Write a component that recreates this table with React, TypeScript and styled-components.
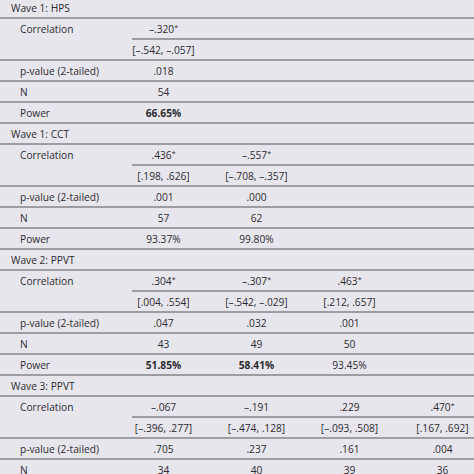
import React from 'react';
import styled, { createGlobalStyle } from 'styled-components';

const GlobalStyle = createGlobalStyle`
  html, body {
    margin: 0;
    padding: 0;
    overflow: hidden;
    background: #e8e6ed;
  }
`;

const Table = styled.div`
  width: 489px;
  margin-top: -2px;
  font-family: 'Open Sans', 'Noto Sans', sans-serif;
  font-size: 10.2px;
  color: #2c2b30;
  background: #e8e6ed;
`;

const Row = styled.div<{ $rule?: boolean }>`
  display: grid;
  grid-template-columns: 117px repeat(4, 93px);
  height: 19px;
  align-items: center;
  border-bottom: ${({ $rule }) => ($rule ? '2px solid #9d9ca1' : 'none')};
`;

const Header = styled.div`
  grid-column: 1 / -1;
  padding-left: 11px;
`;

const Label = styled.div`
  padding-left: 20px;
  white-space: nowrap;
`;

const Cell = styled.div<{ $bold?: boolean }>`
  text-align: center;
  white-space: nowrap;
  font-weight: ${({ $bold }) => ($bold ? 700 : 400)};
`;

const Star = styled.sup`
  font-size: 7px;
  line-height: 0;
  vertical-align: 3px;
`;

const Rule = styled.div`
  height: 2px;
  margin-left: 132px;
  background: #9d9ca1;
`;

interface IValue {
  r: string;
  sig?: boolean;
  ci: string;
  p: string;
  n: string;
  power: string;
  bold?: boolean;
}

interface ISection {
  title: string;
  values: IValue[];
}

const sections: ISection[] = [
  {
    title: 'Wave 1: HPS',
    values: [{ r: '–.320', sig: true, ci: '[–.542, –.057]', p: '.018', n: '54', power: '66.65%', bold: true }],
  },
  {
    title: 'Wave 1: CCT',
    values: [
      { r: '.436', sig: true, ci: '[.198, .626]', p: '.001', n: '57', power: '93.37%' },
      { r: '–.557', sig: true, ci: '[–.708, –.357]', p: '.000', n: '62', power: '99.80%' },
    ],
  },
  {
    title: 'Wave 2: PPVT',
    values: [
      { r: '.304', sig: true, ci: '[.004, .554]', p: '.047', n: '43', power: '51.85%', bold: true },
      { r: '–.307', sig: true, ci: '[–.542, –.029]', p: '.032', n: '49', power: '58.41%', bold: true },
      { r: '.463', sig: true, ci: '[.212, .657]', p: '.001', n: '50', power: '93.45%' },
    ],
  },
  {
    title: 'Wave 3: PPVT',
    values: [
      { r: '–.067', ci: '[–.396, .277]', p: '.705', n: '34', power: '' },
      { r: '–.191', ci: '[–.474, .128]', p: '.237', n: '40', power: '' },
      { r: '.229', ci: '[–.093, .508]', p: '.161', n: '39', power: '' },
      { r: '.470', sig: true, ci: '[.167, .692]', p: '.004', n: '36', power: '' },
    ],
  },
];

const Section: React.FC<{ section: ISection }> = ({ section }) => {
  const { title, values } = section;
  return (
    <>
      <Row $rule>
        <Header>{title}</Header>
      </Row>
      <Row>
        <Label>Correlation</Label>
        {values.map((v, i) => (
          <Cell key={i}>
            {v.r}
            {v.sig && <Star>*</Star>}
          </Cell>
        ))}
      </Row>
      <Rule />
      <Row $rule>
        <Label />
        {values.map((v, i) => (
          <Cell key={i}>{v.ci}</Cell>
        ))}
      </Row>
      <Row $rule>
        <Label>p-value (2-tailed)</Label>
        {values.map((v, i) => (
          <Cell key={i}>{v.p}</Cell>
        ))}
      </Row>
      <Row $rule>
        <Label>N</Label>
        {values.map((v, i) => (
          <Cell key={i}>{v.n}</Cell>
        ))}
      </Row>
      <Row $rule>
        <Label>Power</Label>
        {values.map((v, i) => (
          <Cell key={i} $bold={v.bold}>
            {v.power}
          </Cell>
        ))}
      </Row>
    </>
  );
};

const App: React.FC = () => {
  return (
    <>
      <GlobalStyle />
      <Table>
        {sections.map((s) => (
          <Section key={s.title} section={s} />
        ))}
      </Table>
    </>
  );
};

export default App;
